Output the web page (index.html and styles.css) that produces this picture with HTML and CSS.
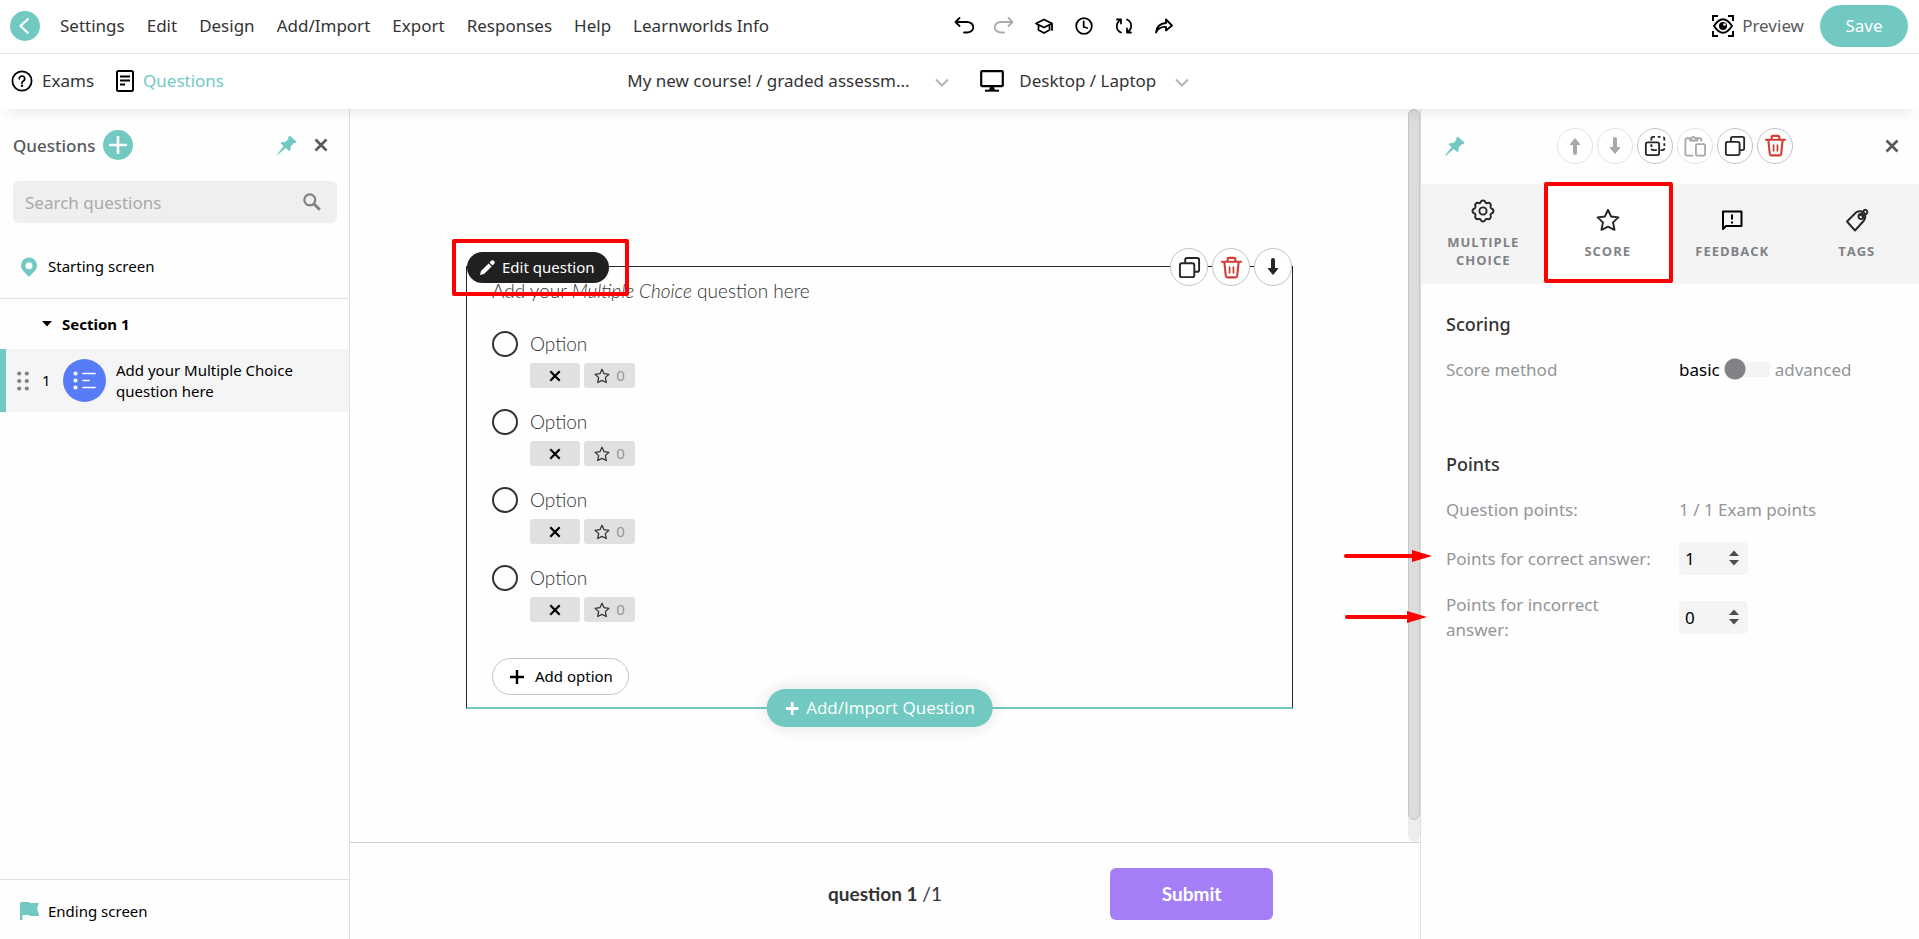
FILE: index.html
```html
<!DOCTYPE html>
<html lang="en">
<head>
<meta charset="utf-8">
<title>Exam builder</title>
<link rel="stylesheet" href="styles.css">
</head>
<body>
<svg class="sprite" aria-hidden="true">
  <symbol id="i-pin" viewBox="0 0 20 20"><path fill="currentColor" d="M12.600.6 19.400 6.400 18.600 8.200 17 8 13.600 11.600C14 13.400 13.700 14.900 12.600 16.200L8.600 12.900 1 19.800.2 19.200 6.600 11.200 3.400 7.900C4.800 7 6.400 6.800 8 7.200L11.500 4 11.200 2.200Z"/></symbol>
  <symbol id="i-close" viewBox="0 0 14 14"><path d="M1.500 1.500l11 11M12.500 1.500l-11 11" stroke="currentColor" stroke-width="2.600" fill="none"/></symbol>
  <symbol id="i-plus" viewBox="0 0 20 20"><path d="M10 1v18M1 10h18" stroke="currentColor" stroke-width="3" stroke-linecap="round" fill="none"/></symbol>
  <symbol id="i-copy" viewBox="0 0 24 24"><g fill="none" stroke="currentColor" stroke-width="2" stroke-linejoin="round"><rect x="2" y="7.500" width="15" height="14.500" rx="2"/><path d="M7.500 7.500V4a2 2 0 0 1 2-2H20a2 2 0 0 1 2 2v10.500a2 2 0 0 1-2 2h-3"/></g></symbol>
  <symbol id="i-trash" viewBox="0 0 24 24"><g fill="none" stroke="currentColor" stroke-width="2.200" stroke-linejoin="round" stroke-linecap="round"><path d="M2 6h20M8 6V3.500A1.500 1.500 0 0 1 9.500 2h5A1.500 1.500 0 0 1 16 3.500V6M4.500 6l1.600 15a1.500 1.500 0 0 0 1.500 1.300h8.800a1.500 1.500 0 0 0 1.500-1.300L19.500 6"/><path d="M10 11.500v6M14 11.500v6" stroke-width="1.800"/></g></symbol>
  <symbol id="i-down" viewBox="0 0 12 18"><path d="M6 2v9" stroke="currentColor" stroke-width="4" stroke-linecap="round"/><path d="M1.200 10.500h9.600L6 16.500z" fill="currentColor" stroke="currentColor" stroke-linejoin="round"/></symbol>
  <symbol id="i-star" viewBox="0 0 24 24"><path d="M12 1.800l3.100 6.700 7.300.9-5.400 5 1.500 7.400L12 18.600l-6.500 3.200L7 14.400l-5.400-5 7.300-.9z" fill="none" stroke="currentColor" stroke-width="1.900" stroke-linejoin="round"/></symbol>
  <symbol id="i-chevron" viewBox="0 0 14 10"><path d="M1 1.500l6 6 6-6" fill="none" stroke="currentColor" stroke-width="2"/></symbol>
  <symbol id="i-arrow" viewBox="0 0 88 12"><path d="M2 6h70" stroke="currentColor" stroke-width="4" stroke-linecap="round"/><path d="M68 0l20 6-20 6z" fill="currentColor"/></symbol>
  <symbol id="i-spin" viewBox="0 0 10 16"><path d="M0 6l5-5.500L10 6zM0 10l5 5.500 5-5.500z" fill="currentColor"/></symbol>
</svg>

<header class="top">
  <div class="bar">
    <div class="bar-start">
      <button class="round back" aria-label="Back"><svg width="12" height="18" viewBox="0 0 12 18"><path d="M10.500 1.500L2.500 9l8 7.500" fill="none" stroke="currentColor" stroke-width="2.200"/></svg></button>
      <nav class="menu">
        <button>Settings</button><button>Edit</button><button>Design</button><button>Add/Import</button><button>Export</button><button>Responses</button><button>Help</button><button>Learnworlds Info</button>
      </nav>
    </div>
    <div class="tools">
      <button aria-label="Undo"><svg width="20" height="20" viewBox="0 0 20 20"><path d="M5.500 2L1.500 6l4 4M2 6h11a6 5 0 0 1 0 10.500H10" class="ln"/></svg></button>
      <button aria-label="Redo" class="off"><svg width="20" height="20" viewBox="0 0 20 20"><path d="M14.500 2l4 4-4 4M18 6H7a6 5 0 0 0 0 10.500h3" class="ln"/></svg></button>
      <button aria-label="Course"><svg width="20" height="20" viewBox="0 0 20 20"><path d="M10 3.500L2 7.500l8 4 8-4zM4.500 9v5l5.500 3 5.500-3V9M18 7.500V14" class="ln"/></svg></button>
      <button aria-label="History"><svg width="20" height="20" viewBox="0 0 20 20"><circle cx="10" cy="10" r="7.800" class="ln"/><path d="M9.700 5.500V11l3.500 1" class="ln"/></svg></button>
      <button aria-label="Sync"><svg width="20" height="20" viewBox="0 0 20 20"><path d="M7 16.500C1.500 14 1.500 7 6.500 4M3 3.500h4v4M13 3.500c5.500 2.500 5.500 9.500.5 12.500M17 16.500h-4v-4" class="ln"/></svg></button>
      <button aria-label="Share"><svg width="20" height="20" viewBox="0 0 20 20"><path d="M12 3.500l6 6-6 5v-3.500C7 10.500 4 12.500 2 16.500 2.500 10.500 6.500 7.500 12 7z" class="ln"/></svg></button>
    </div>
    <div class="bar-end">
      <button class="preview"><svg width="22" height="22" viewBox="0 0 22 22"><path d="M1 6V1h5M16 1h5v5M21 16v5h-5M6 21H1v-5" fill="none" stroke="#000" stroke-width="2"/><path d="M2 11q9-13.500 18 0-9 13.500-18 0z" fill="none" stroke="#000" stroke-width="2"/><circle cx="11" cy="11" r="4" fill="#000"/><circle cx="12.500" cy="9.500" r="1.300" fill="#fff"/></svg>Preview</button>
      <button class="save">Save</button>
    </div>
  </div>
  <div class="subbar">
    <nav class="modes">
      <a href="#exams"><svg width="22" height="22" viewBox="0 0 22 22"><circle cx="11" cy="11" r="9.600" fill="none" stroke="#000" stroke-width="1.800"/><path d="M8.300 8.800a2.700 2.700 0 1 1 4 2.300c-1 .6-1.300 1-1.300 2.100" fill="none" stroke="#000" stroke-width="1.700" stroke-linecap="round"/><circle cx="11" cy="15.800" r="1.200"/></svg>Exams</a>
      <a href="#questions" class="current"><svg width="18" height="22" viewBox="0 0 18 22"><rect x="1" y="1" width="16" height="20" rx="1.500" fill="none" stroke="#000" stroke-width="2"/><path d="M4 6.500h10M4 10.500h10M4 14.500h5" stroke="#000" stroke-width="1.800"/></svg>Questions</a>
    </nav>
    <div class="pickers">
      <div class="picker exam"><select aria-label="Exam"><option>My new course! / graded assessm...</option></select><svg width="14" height="10"><use href="#i-chevron"/></svg></div>
      <svg class="monitor" width="24" height="22" viewBox="0 0 24 22"><rect x="1.200" y="1.200" width="21.600" height="15" rx="1" fill="none" stroke="#000" stroke-width="2.200"/><path d="M9 20.500l1-3.500h4l1 3.500z"/><path d="M5 20.700h14" stroke="#000" stroke-width="2"/></svg>
      <div class="picker"><select aria-label="Device"><option>Desktop / Laptop</option></select><svg width="14" height="10"><use href="#i-chevron"/></svg></div>
    </div>
  </div>
</header>

<div class="workspace">
  <aside class="side">
    <div class="side-head">
      <h2>Questions</h2>
      <button class="round" aria-label="Add question"><svg width="18" height="18"><use href="#i-plus"/></svg></button>
      <button class="ghost pin" aria-label="Pin"><svg width="20" height="20"><use href="#i-pin"/></svg></button>
      <button class="ghost" aria-label="Close"><svg width="14" height="14"><use href="#i-close"/></svg></button>
    </div>
    <div class="search">
      <input type="text" placeholder="Search questions" aria-label="Search questions">
      <svg width="18" height="18" viewBox="0 0 18 18"><circle cx="6.800" cy="6.800" r="5.500" fill="none" stroke="currentColor" stroke-width="2.200"/><path d="M10.800 10.800l6 6" stroke="currentColor" stroke-width="2.800"/></svg>
    </div>
    <a class="screen" href="#start"><svg width="20" height="20" viewBox="0 0 20 20"><path fill="currentColor" fill-rule="evenodd" d="M10 .5a8 8 0 0 1 8 8c0 4.500-4 7-8 11.500-4-4.500-8-7-8-11.500a8 8 0 0 1 8-8zm0 4.700a3.500 3.500 0 1 0 0 7 3.500 3.500 0 0 0 0-7z"/></svg>Starting screen</a>
    <div class="section">
      <button class="section-title"><svg width="10" height="6" viewBox="0 0 10 6"><path d="M0 0h10L5 5.500z"/></svg>Section 1</button>
      <a class="item" href="#q1">
        <svg class="grip" width="12" height="20" viewBox="0 0 12 20"><g fill="currentColor"><circle cx="2.200" cy="2.500" r="2.100"/><circle cx="9.800" cy="2.500" r="2.100"/><circle cx="2.200" cy="10" r="2.100"/><circle cx="9.800" cy="10" r="2.100"/><circle cx="2.200" cy="17.500" r="2.100"/><circle cx="9.800" cy="17.500" r="2.100"/></g></svg>
        <span class="num">1</span>
        <svg width="43" height="43" viewBox="0 0 43 43"><circle cx="21.500" cy="21.500" r="21.500" fill="#587cf7"/><g fill="#fff"><circle cx="12.500" cy="14.500" r="2"/><circle cx="12.500" cy="21.500" r="2"/><circle cx="12.500" cy="28.500" r="2"/></g><path d="M20 14.500h12M20 21.500h6M20 28.500h12" stroke="#fff" stroke-width="1.600" stroke-linecap="round"/></svg>
        <span class="item-text">Add your Multiple Choice question here</span>
      </a>
    </div>
    <a class="screen ending" href="#end"><svg width="20" height="20" viewBox="0 0 20 20"><path fill="currentColor" d="M1 2l1-1h8l1 1h8.500v1L18 7.500l2 6V15h-9l-1-1H3.500v5H1z"/></svg>Ending screen</a>
  </aside>

  <main class="stage">
    <div class="canvas">
      <div class="canvas-body">
        <section class="card">
          <div class="edit-wrap">
            <button class="edit"><svg width="15" height="15" viewBox="0 0 15 15"><path d="M0 15l1-4 7.600-7.600 3 3L4 14zM9.500 2.500L11.500.6q1-.9 2 0l.9.900q.9 1 0 2l-1.900 2z" fill="currentColor"/></svg>Edit question</button>
          </div>
          <div class="card-tools">
            <button class="circle" aria-label="Duplicate"><svg width="23" height="23"><use href="#i-copy"/></svg></button>
            <button class="circle red" aria-label="Delete"><svg width="23" height="23"><use href="#i-trash"/></svg></button>
            <button class="circle" aria-label="Move down"><svg width="12" height="18"><use href="#i-down"/></svg></button>
          </div>
          <p class="prompt">Add your <em>Multiple Choice</em> question here</p>
          <ul class="options">
            <li><input type="radio" name="q" id="o1"><label for="o1">Option</label><div class="chips"><button aria-label="Incorrect"><svg width="12" height="12"><use href="#i-close"/></svg></button><button><svg width="16" height="16"><use href="#i-star"/></svg>0</button></div></li>
            <li><input type="radio" name="q" id="o2"><label for="o2">Option</label><div class="chips"><button aria-label="Incorrect"><svg width="12" height="12"><use href="#i-close"/></svg></button><button><svg width="16" height="16"><use href="#i-star"/></svg>0</button></div></li>
            <li><input type="radio" name="q" id="o3"><label for="o3">Option</label><div class="chips"><button aria-label="Incorrect"><svg width="12" height="12"><use href="#i-close"/></svg></button><button><svg width="16" height="16"><use href="#i-star"/></svg>0</button></div></li>
            <li><input type="radio" name="q" id="o4"><label for="o4">Option</label><div class="chips"><button aria-label="Incorrect"><svg width="12" height="12"><use href="#i-close"/></svg></button><button><svg width="16" height="16"><use href="#i-star"/></svg>0</button></div></li>
          </ul>
          <button class="add-option"><svg width="14" height="14" viewBox="0 0 14 14"><path d="M7 0v14M0 7h14" stroke="currentColor" stroke-width="2.400"/></svg>Add option</button>
          <button class="add-question"><svg width="13" height="13" viewBox="0 0 14 14"><path d="M7 0v14M0 7h14" stroke="currentColor" stroke-width="3"/></svg>Add/Import Question</button>
        </section>
      </div>
      <div class="scroll"><div class="thumb"></div></div>
    </div>
    <footer class="progress">
      <p><b>question 1</b> /1</p>
      <button class="submit">Submit</button>
    </footer>
  </main>

  <aside class="panel">
    <div class="panel-head">
      <button class="ghost pin" aria-label="Pin"><svg width="20" height="20"><use href="#i-pin"/></svg></button>
      <div class="actions">
        <button class="circle off" aria-label="Move up"><svg class="flip" width="12" height="18"><use href="#i-down"/></svg></button>
        <button class="circle off" aria-label="Move down"><svg width="12" height="18"><use href="#i-down"/></svg></button>
        <button class="circle" aria-label="Copy"><svg width="22" height="22" viewBox="0 0 24 24"><g fill="none" stroke="currentColor" stroke-width="2"><rect x="2" y="8" width="14.500" height="14" rx="2"/><path d="M8 6V4q0-2 2-2h2M15 2h3M21 2.200q1.200.4 1.200 2V6M22.200 9v3M22.200 14.500q0 2-2 2H18M8 10v3M8 15q.5 1.500 2 1.500h4"/></g></svg></button>
        <button class="circle off" aria-label="Paste"><svg width="22" height="22" viewBox="0 0 24 24"><g fill="none" stroke="currentColor" stroke-width="2"><path d="M10 22.500H3.500a2 2 0 0 1-2-2V5.500a2 2 0 0 1 2-2H6M14 3.500h3a2 2 0 0 1 2 2V7"/><path d="M6.500 6V3.500h2q1.500-3.500 3.500 0h2.500V6z" stroke-linejoin="round"/><rect x="13" y="10" width="10" height="12.500" rx="1.500"/></g></svg></button>
        <button class="circle" aria-label="Duplicate"><svg width="22" height="22"><use href="#i-copy"/></svg></button>
        <button class="circle red" aria-label="Delete"><svg width="23" height="23"><use href="#i-trash"/></svg></button>
      </div>
      <button class="ghost" aria-label="Close"><svg width="14" height="14"><use href="#i-close"/></svg></button>
    </div>
    <div class="tabs" role="tablist">
      <button role="tab"><svg width="24" height="24" viewBox="0 0 24 24"><g fill="none" stroke="currentColor" stroke-width="1.900" stroke-linejoin="round"><circle cx="12" cy="12" r="3.600"/><path d="M9.500 3.600Q10 1.500 12 1.500t2.500 2.100q.8.500 1.500.6 1.700-1.100 3.100.3t.4 3.100q.1.900.6 1.700Q22.500 10 22.500 12t-2.400 2.600q-.5.800-.6 1.700 1 1.800-.4 3.200t-3.200.3q-.8.200-1.400.6-.5 2.100-2.500 2.100t-2.500-2.100q-.6-.4-1.400-.6-1.800 1.100-3.200-.3t-.4-3.200q-.1-.9-.6-1.700Q1.500 14 1.500 12t2.400-2.700q.5-.8.6-1.700-1-1.700.4-3.100t3.100-.3q.7-.1 1.500-.6z"/></g></svg>MULTIPLE CHOICE</button>
      <button role="tab" aria-selected="true"><svg width="24" height="24"><use href="#i-star"/></svg>SCORE</button>
      <button role="tab"><svg width="24" height="24" viewBox="0 0 24 24"><path d="M3 21V3.500h18.500V18H6z" fill="none" stroke="#000" stroke-width="2" stroke-linejoin="round"/><path d="M12 6.500v5M12 13.500v2" stroke="#000" stroke-width="2"/></svg>FEEDBACK</button>
      <button role="tab"><svg width="24" height="24" viewBox="0 0 24 24"><g fill="none" stroke="currentColor" stroke-width="1.900" stroke-linejoin="round"><path d="M2 13.500L11 4.500q4-2.500 8 0 2.500 4 0 8L10 22.500z"/><circle cx="16" cy="8.500" r="2.500"/><path d="M15.500 8L19 2.200q2-1 3 .8t-1 3.200L17 9"/></g></svg>TAGS</button>
    </div>
    <div class="settings">
      <h3>Scoring</h3>
      <div class="row method"><label for="method">Score method</label><div class="value"><span class="on">basic</span><input type="checkbox" class="switch" id="method"><span>advanced</span></div></div>
      <h3 class="points">Points</h3>
      <div class="row total"><span>Question points:</span><div class="value">1 / 1 Exam points</div></div>
      <div class="row correct"><svg class="mark first" width="88" height="12"><use href="#i-arrow"/></svg><label for="ok">Points for correct answer:</label><div class="number"><input type="number" id="ok" value="1"><svg width="10" height="16"><use href="#i-spin"/></svg></div></div>
      <div class="row incorrect"><svg class="mark second" width="82" height="12" viewBox="6 0 82 12"><path d="M8 6h64" stroke="currentColor" stroke-width="4" stroke-linecap="round"/><path d="M68 0l20 6-20 6z" fill="currentColor"/></svg><label for="no">Points for incorrect answer:</label><div class="number"><input type="number" id="no" value="0"><svg width="10" height="16"><use href="#i-spin"/></svg></div></div>
    </div>
  </aside>
</div>
</body>
</html>
```

FILE: styles.css
```css
:root {
  --teal: #71c9c1;
  --line: #e0e0e0;
  --ink: #333;
  --muted: #939598;
  --mark: #fe0000;
  --ui: "Noto Sans", "Open Sans", sans-serif;
}
* { box-sizing: border-box; }
body {
  margin: 0;
  min-height: 100vh;
  display: flex;
  flex-direction: column;
  background: #fefefe;
  color: var(--ink);
  font: 17px/24px var(--ui);
}
button, input, select { font: inherit; color: inherit; }
button { border: 0; padding: 0; background: none; cursor: pointer; }
a { color: inherit; text-decoration: none; }
h2, h3, p, ul { margin: 0; padding: 0; }
svg { display: block; flex: none; }
.sprite { position: absolute; width: 0; height: 0; }
.ln { fill: none; stroke: currentColor; stroke-width: 1.8; stroke-linejoin: round; stroke-linecap: round; }

.round {
  width: 30px; height: 30px; border-radius: 50%;
  display: grid; place-items: center;
  background: var(--teal); color: #fff;
}
.ghost { display: grid; place-items: center; color: #595959; }
.ghost.pin { color: var(--teal); }
.circle {
  width: 36px; height: 36px; border-radius: 50%;
  display: grid; place-items: center;
  background: #fff; border: 1px solid #c4c4c4; color: #262626;
}
.circle.red { color: #cf3e36; }
.circle.off { border-color: #e4e4e4; color: #a8a8a8; }
.flip { transform: rotate(180deg); }

/* header */
.top { background: #fff; position: relative; z-index: 3; box-shadow: 0 10px 14px -8px rgba(0, 0, 0, .1); }
.bar { height: 54px; display: flex; align-items: center; border-bottom: 1px solid #e5e5e5; padding: 0 11px 1px 10px; }
.bar-start { flex: 0 0 50%; display: flex; align-items: center; gap: 20px; margin-right: -5px; }
.back svg { margin-right: 3px; }
.menu { display: flex; gap: 22px; }
.tools { display: flex; gap: 20px; color: #000; }
.tools .off { color: #aaa; }
.bar-end { margin-left: auto; display: flex; align-items: center; gap: 16px; }
.preview { display: flex; align-items: center; gap: 8px; color: #58595b; }
.save { width: 88px; height: 42px; border-radius: 21px; background: var(--teal); color: #fff; }
.subbar { height: 55px; display: flex; align-items: center; padding: 0 0 1px 11px; }
.modes { flex: 0 0 32.3%; display: flex; gap: 22px; }
.modes a { display: flex; align-items: center; gap: 9px; }
.modes .current { color: var(--teal); }
.pickers { display: flex; align-items: center; }
.picker { position: relative; }
.picker select { appearance: none; border: 0; background: none; padding: 0 32px 0 0; margin: 0; }
.exam select { padding-right: 39px; }
.picker svg { position: absolute; right: 0; top: 9px; color: #b3b3b3; pointer-events: none; }
.monitor { margin: 0 15px 0 31px; }

.workspace { flex: 1; display: flex; align-items: stretch; }

/* left list */
.side { flex: 0 0 350px; border-right: 1px solid var(--line); display: flex; flex-direction: column; color: #000; font-size: 15px; line-height: 21px; }
.side-head { display: flex; align-items: center; padding: 21px 21px 0 13px; }
.side-head h2 { font-size: 17px; font-weight: 500; color: #58595b; margin-right: 8px; }
.side-head .pin { margin: 0 17px 0 auto; }
.search { position: relative; margin: 21px 12px 0 13px; }
.search input { width: 100%; height: 42px; border: 0; border-radius: 6px; background: #efefef; padding: 0 48px 0 12px; font-size: 17px; }
.search input::placeholder { color: #a9a9a9; opacity: 1; }
.search svg { position: absolute; right: 16px; top: 12px; color: #808080; }
.screen { display: flex; align-items: center; gap: 9px; padding: 0 19px; }
.screen svg { color: var(--teal); }
.screen:not(.ending) { padding-top: 33px; padding-bottom: 21px; border-bottom: 1px solid var(--line); }
.ending { margin-top: auto; height: 60px; padding-top: 3px; border-top: 1px solid var(--line); }
.section-title { display: flex; align-items: center; gap: 10px; height: 50px; padding-left: 42px; font-weight: 700; }
.item { display: flex; align-items: center; height: 63px; padding: 0 20px 0 11px; border-left: 6px solid var(--teal); background: #f5f5f5; }
.grip { color: #808080; }
.num { flex: none; width: 34px; padding-left: 13px; }
.item-text { margin-left: 10px; }

/* stage */
.stage { flex: 1; min-width: 0; display: flex; flex-direction: column; }
.canvas { flex: 1; display: flex; }
.canvas-body { flex: 1; padding: 157px 115px 0 116px; }
.card { position: relative; border: 1px solid #262626; border-bottom: 2px solid var(--teal); padding: 12px 25px 12px; font-family: Lato, "Open Sans", sans-serif; }
.edit-wrap { position: absolute; left: -15px; top: -28px; border: 4px solid var(--mark); border-radius: 2px; padding: 9px 16px 9px 11px; z-index: 1; }
.edit { display: flex; align-items: center; gap: 7px; height: 31px; padding: 0 14px 0 13px; border-radius: 16px; background: #202020; color: #fff; font: 15px/21px var(--ui); white-space: nowrap; }
.card-tools { position: absolute; right: 0; top: -19px; display: flex; gap: 4px; }
.card-tools .circle { width: 38px; height: 38px; }
.prompt { font-size: 19px; font-weight: 300; line-height: 24px; margin-bottom: 28px; }
.options { list-style: none; display: grid; gap: 21px; }
.options li { display: grid; grid-template-columns: 26px 1fr; column-gap: 12px; row-gap: 6px; align-items: center; }
.options input { appearance: none; width: 26px; height: 26px; margin: 0; border: 2px solid var(--ink); border-radius: 50%; }
.options label { font-size: 19px; font-weight: 300; }
.chips { grid-column: 2; display: flex; gap: 4px; }
.chips button { width: 50px; height: 25px; border-radius: 3px; background: #e0e0e0; color: #000; display: flex; align-items: center; justify-content: center; gap: 6px; font: 15px/21px var(--ui); }
.chips button + button { width: 51px; color: var(--muted); }
.chips button + button svg { color: var(--ink); }
.add-option { display: flex; align-items: center; gap: 11px; height: 37px; margin-top: 36px; padding: 0 15px 0 17px; border: 1px solid #c4c4c4; border-radius: 19px; color: #000; font: 15px/21px var(--ui); background: #fff; }
.add-question { position: absolute; left: 50%; bottom: -20px; transform: translateX(-50%); display: flex; align-items: center; gap: 8px; height: 38px; padding: 0 18px 0 19px; border-radius: 19px; background: var(--teal); color: #fff; font: 17px/24px "Open Sans", sans-serif; white-space: nowrap; box-shadow: 0 0 16px rgba(0, 0, 0, .12); }
.scroll { width: 12px; background: #ededed; border-radius: 6px; }
.thumb { height: 97%; border: 1px solid #c6c6c6; border-radius: 6px; background: #dcdcdc; }
.progress { height: 97px; border-top: 1px solid #cfcfcf; display: grid; grid-template-columns: 1fr auto 1fr; align-items: center; padding: 6px 147px 0; font: 19px/24px Lato, sans-serif; }
.progress p { grid-column: 2; }
.submit { justify-self: end; width: 163px; height: 52px; border-radius: 6px; background: #a47ff7; color: #fff; font-weight: 700; }

/* right panel */
.panel { flex: 0 0 499px; border-left: 1px solid var(--line); position: relative; z-index: 2; }
.panel-head { height: 75px; display: flex; align-items: center; justify-content: space-between; padding: 0 20px 2px 24px; }
.actions { display: flex; gap: 4px; }
.tabs { display: grid; grid-template-columns: repeat(4, 1fr); background: #f4f4f4; }
.tabs button { position: relative; height: 100px; display: flex; flex-direction: column; align-items: center; justify-content: center; gap: 10px; padding: 0 20px; color: #808285; font: 700 13px/18px "Open Sans", sans-serif; letter-spacing: 1px; }
.tabs svg { color: #262626; }
.tabs [aria-selected] { background: #fff; }
.tabs [aria-selected]::after { content: ""; position: absolute; inset: -2px -3px 1px -2px; border: 4px solid var(--mark); border-radius: 2px; }
.settings { padding: 28px 24px 0 25px; color: var(--muted); }
.settings h3 { font-size: 18px; font-weight: 500; color: var(--ink); }
.settings .points { margin-top: 67px; }
.row { position: relative; display: grid; grid-template-columns: 215px 1fr; column-gap: 18px; align-items: center; line-height: 25px; }
.method { height: 32px; margin-top: 17px; }
.total { margin-top: 21px; }
.correct { margin-top: 20px; }
.incorrect { margin-top: 17px; }
.value { display: flex; align-items: center; }
.on { color: #000; }
.switch { appearance: none; width: 46px; height: 22px; margin: 0 5px 0 4px; background: radial-gradient(circle at 11px 11px, #808285 10px, transparent 11px), linear-gradient(#f4f4f4, #f4f4f4) 8px 4px / 38px 15px no-repeat; border-radius: 0 8px 8px 0; }
.number { position: relative; width: 69px; }
.number input { display: block; width: 100%; height: 33px; border: 0; border-radius: 5px; background: #f4f4f4; color: #000; padding: 0 24px 0 6px; appearance: textfield; }
.number input::-webkit-inner-spin-button { appearance: none; }
.number svg { position: absolute; right: 9px; top: 8px; color: #4d4d4d; }
.mark { position: absolute; right: 100%; color: var(--mark); }
.first { margin-right: 14px; top: 8px; }
.second { margin-right: 19px; top: 19px; }
```
